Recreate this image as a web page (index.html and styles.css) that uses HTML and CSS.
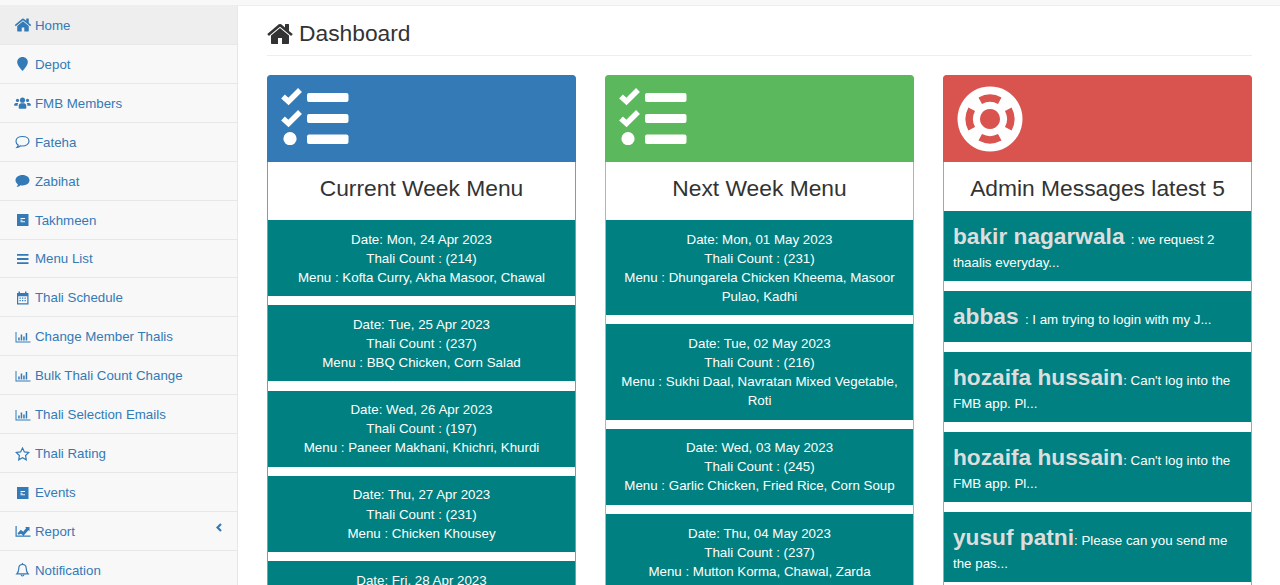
FILE: index.html
```html
<!DOCTYPE html>
<html lang="en">
<head>
<meta charset="utf-8">
<title>Dashboard</title>
<link rel="stylesheet" href="styles.css">
</head>
<body>
<svg class="defs" width="0" height="0" aria-hidden="true">
  <symbol id="i-home" viewBox="0 0 1792 1792"><path d="M1472 992v480q0 26-19 45t-45 19h-384v-384h-256v384h-384q-26 0-45-19t-19-45v-480q0-1 .5-3t.5-3l575-474 575 474q1 2 1 6zm223-69l-62 74q-8 9-21 11h-3q-13 0-21-7l-692-577-692 577q-12 8-24 7-13-2-21-11l-62-74q-8-10-7-23.500t11-21.500l719-599q32-26 76-26t76 26l244 204v-195q0-14 9-23t23-9h192q14 0 23 9t9 23v408l219 182q10 8 11 21.500t-7 23.500z"/></symbol>
  <symbol id="i-pin" viewBox="0 0 16 16"><path d="M8 1c3 0 5.300 2.200 5.300 5 0 3-3 6.500-5.300 9-2.300-2.500-5.300-6-5.300-9 0-2.800 2.300-5 5.300-5z"/></symbol>
  <symbol id="i-users" viewBox="0 0 18 16"><circle cx="9" cy="5" r="2.700"/><circle cx="3.700" cy="5.300" r="1.700"/><circle cx="14.300" cy="5.300" r="1.700"/><path d="M5 13.500V11c0-1.700 1.300-2.700 2.500-2.700h3c1.200 0 2.500 1 2.500 2.700v2.500q0 .5-1 .5H6q-1 0-1-.5zM0 10.500c0-1.500 1-2.500 2-2.500h2.500C4 8.700 3.800 9.500 3.800 10.800H1q-1 0-1-.3zM18 10.500c0-1.500-1-2.500-2-2.500h-2.500c.5.700.7 1.500.7 2.800H17q1 0 1-.3z"/></symbol>
  <symbol id="i-comment-o" viewBox="0 0 16 16"><path class="line" d="M8 2.500c3.700 0 6.500 2 6.500 4.700S11.700 12 8 12c-.7 0-1.300 0-2-.2-1 .9-2.200 1.500-3.500 1.700.7-.8 1.100-1.600 1.200-2.500C2.400 10.200 1.500 8.800 1.500 7.200 1.500 4.500 4.300 2.500 8 2.500z"/></symbol>
  <symbol id="i-comment" viewBox="0 0 16 16"><path d="M8 2c4 0 7 2.300 7 5.200s-3 5.200-7 5.200c-.7 0-1.300 0-2-.2-1 1-2.500 1.600-4 1.800.8-.9 1.300-1.800 1.400-2.800C2 10.200 1 8.800 1 7.200 1 4.300 4 2 8 2z"/></symbol>
  <symbol id="i-book" viewBox="0 0 16 16"><path fill-rule="evenodd" d="M2.500 2h11.500v12H2.500zM6 6v1h4.500V6zM6 7.700v1h2V7.700zM6 9.300v1h4.500v-1z"/></symbol>
  <symbol id="i-bars" viewBox="0 0 16 16"><path d="M2.500 3h11.500v1.800H2.500zM2.500 7.100h11.500v1.800H2.500zM2.500 11.200h11.500V13H2.500z"/></symbol>
  <symbol id="i-cal" viewBox="0 0 16 16"><path fill-rule="evenodd" d="M4 1.500h1.500V3h5V1.500H12V3h2v11.500H2.500V3H4zM3.700 6.300v7h9.100v-7z"/><path d="M5 7.500h1.300v1.300H5zM7.500 7.500h1.300v1.300H7.500zM10 7.500h1.300v1.300H10zM5 10h1.300v1.300H5zM7.500 10h1.300v1.300H7.500zM10 10h1.300v1.300H10z"/></symbol>
  <symbol id="i-chart" viewBox="0 0 16 16"><path d="M1 3h1v9.500h14v1H1zM3.700 8.500h1.500v3H3.700zM6.200 5.500h1.500v6H6.200zM8.700 7.500h1.500v4H8.700zM11.200 4h1.500v7.500h-1.500z"/></symbol>
  <symbol id="i-star" viewBox="0 0 16 16"><path class="line" d="M8 2l1.900 3.900 4.300.6-3.100 3 .7 4.300L8 11.800l-3.800 2 .7-4.300-3.100-3 4.300-.6z"/></symbol>
  <symbol id="i-area" viewBox="0 0 16 16"><path d="M1 3h1.200v9.500H16v1.200H1zM3 10.500l3.300-3.700 2.400 2 3-3.800-1.200-1H15v4.200l-1.100-1-4.900 5.600-2.500-2L4 11.800z"/></symbol>
  <symbol id="i-bell" viewBox="0 0 16 16"><path class="line" d="M8 2.500c2.300 0 3.700 1.700 3.700 3.700 0 3 .7 4.300 2 5.600H2.300c1.300-1.300 2-2.600 2-5.600 0-2 1.400-3.700 3.700-3.700z"/><path class="line" d="M6.500 12.500c.2 1 .8 1.500 1.500 1.500s1.300-.5 1.500-1.500M8 1v1.500"/></symbol>
  <symbol id="i-chev" viewBox="0 0 6 9"><path class="chev-line" d="M5 1L1.500 4.500 5 8"/></symbol>
  <symbol id="i-tasks" viewBox="0 0 68 58"><path class="tick" d="M2 9.500l5.500 5L19 3"/><path class="tick" d="M2 31.500l5.500 5L19 25"/><circle cx="9" cy="51.700" r="6.600"/><rect x="26" y="6" width="41.500" height="9" rx="2"/><rect x="26" y="27" width="41.500" height="9" rx="2"/><rect x="26" y="47.500" width="41.500" height="9.500" rx="2"/></symbol>
  <symbol id="i-ring" viewBox="0 0 66 66"><path fill-rule="evenodd" d="M33 0.500a32.500 32.500 0 1 0 .01 0zM33 23a10 10 0 1 0 .01 0zM21.500 11.400A24.500 24.500 0 0 1 44.500 11.400L41 18A17 17 0 0 0 25 18zM54.600 21.500A24.500 24.500 0 0 1 54.600 44.500L48 41A17 17 0 0 0 48 25zM44.500 54.600A24.500 24.500 0 0 1 21.500 54.600L25 48A17 17 0 0 0 41 48zM11.400 44.500A24.500 24.500 0 0 1 11.400 21.500L18 25A17 17 0 0 0 18 41z"/></symbol>
</svg>
<div class="topbar"></div>
<div class="layout">
  <nav class="sidebar">
    <a class="item active"><svg class="ic ic-home"><use href="#i-home"/></svg>Home</a>
    <a class="item"><svg class="ic"><use href="#i-pin"/></svg>Depot</a>
    <a class="item"><svg class="ic"><use href="#i-users"/></svg>FMB Members</a>
    <a class="item"><svg class="ic"><use href="#i-comment-o"/></svg>Fateha</a>
    <a class="item"><svg class="ic"><use href="#i-comment"/></svg>Zabihat</a>
    <a class="item"><svg class="ic"><use href="#i-book"/></svg>Takhmeen</a>
    <a class="item"><svg class="ic"><use href="#i-bars"/></svg>Menu List</a>
    <a class="item"><svg class="ic"><use href="#i-cal"/></svg>Thali Schedule</a>
    <a class="item"><svg class="ic"><use href="#i-chart"/></svg>Change Member Thalis</a>
    <a class="item"><svg class="ic"><use href="#i-chart"/></svg>Bulk Thali Count Change</a>
    <a class="item"><svg class="ic"><use href="#i-chart"/></svg>Thali Selection Emails</a>
    <a class="item"><svg class="ic"><use href="#i-star"/></svg>Thali Rating</a>
    <a class="item"><svg class="ic"><use href="#i-book"/></svg>Events</a>
    <a class="item"><svg class="ic"><use href="#i-area"/></svg>Report<svg class="chev"><use href="#i-chev"/></svg></a>
    <a class="item"><svg class="ic"><use href="#i-bell"/></svg>Notification</a>
  </nav>
  <main class="main">
    <h1 class="page-title"><svg class="title-ic"><use href="#i-home"/></svg>Dashboard</h1>
    <div class="cards">
      <section class="card card-blue">
        <div class="card-head"><svg class="tasks"><use href="#i-tasks"/></svg></div>
        <h3 class="card-title">Current Week Menu</h3>
        <div class="row">Date: Mon, 24 Apr 2023<br>Thali Count : (214)<br>Menu : Kofta Curry, Akha Masoor, Chawal</div>
        <div class="row">Date: Tue, 25 Apr 2023<br>Thali Count : (237)<br>Menu : BBQ Chicken, Corn Salad</div>
        <div class="row">Date: Wed, 26 Apr 2023<br>Thali Count : (197)<br>Menu : Paneer Makhani, Khichri, Khurdi</div>
        <div class="row">Date: Thu, 27 Apr 2023<br>Thali Count : (231)<br>Menu : Chicken Khousey</div>
        <div class="row">Date: Fri, 28 Apr 2023<br>Thali Count : (228)<br>Menu : Chicken Biryani</div>
      </section>
      <section class="card card-green">
        <div class="card-head"><svg class="tasks"><use href="#i-tasks"/></svg></div>
        <h3 class="card-title">Next Week Menu</h3>
        <div class="row">Date: Mon, 01 May 2023<br>Thali Count : (231)<br>Menu : Dhungarela Chicken Kheema, Masoor Pulao, Kadhi</div>
        <div class="row">Date: Tue, 02 May 2023<br>Thali Count : (216)<br>Menu : Sukhi Daal, Navratan Mixed Vegetable, Roti</div>
        <div class="row">Date: Wed, 03 May 2023<br>Thali Count : (245)<br>Menu : Garlic Chicken, Fried Rice, Corn Soup</div>
        <div class="row">Date: Thu, 04 May 2023<br>Thali Count : (237)<br>Menu : Mutton Korma, Chawal, Zarda</div>
      </section>
      <section class="card card-red">
        <div class="card-head"><svg class="ring"><use href="#i-ring"/></svg></div>
        <h3 class="card-title card-title-short">Admin Messages latest 5</h3>
        <div class="msg"><span class="who">bakir nagarwala </span>: we request 2 thaalis everyday...</div>
        <div class="msg"><span class="who">abbas </span>: I am trying to login with my J...</div>
        <div class="msg"><span class="who">hozaifa hussain</span>: Can't log into the FMB app. Pl...</div>
        <div class="msg"><span class="who">hozaifa hussain</span>: Can't log into the FMB app. Pl...</div>
        <div class="msg"><span class="who">yusuf patni</span>: Please can you send me the pas...</div>
      </section>
    </div>
  </main>
</div>
</body>
</html>
```
FILE: styles.css
```css
* { box-sizing: border-box; }
html, body { margin: 0; height: 585px; overflow: hidden; }
body { font-family: "Liberation Sans", Arial, sans-serif; font-size: 13.33px; color: #333; background: #fff; }
.defs { position: absolute; }
.line { fill: none; stroke: currentColor; stroke-width: 1.2; }
.tick { fill: none; stroke: currentColor; stroke-width: 5.5; }
.chev-line { fill: none; stroke: currentColor; stroke-width: 2.2; }

.topbar { height: 6px; background: #f8f8f8; border-bottom: 1px solid #eee; }
.layout { display: flex; align-items: flex-start; }

.sidebar { width: 238px; flex: none; height: 579px; background: #f8f8f8; border-right: 1px solid #e7e7e7; }
.item { display: flex; align-items: center; height: 38.93px; padding: 1px 15px 0 14px; color: #337ab7; border-bottom: 1px solid #e7e7e7; font-size: 13.3px; white-space: nowrap; }
.item.active { background: #eee; }
.ic { width: 17px; height: 16px; margin-right: 4px; fill: currentColor; flex: none; }
.ic-home { width: 18px; height: 18px; margin-right: 3px; margin-top: -1px; }
.chev { width: 6px; height: 9px; margin-left: auto; margin-bottom: 7px; }

.main { flex: 1; min-width: 0; padding: 0 28px 0 29px; }
.page-title { display: flex; align-items: center; margin: 0 0 19px; height: 50px; padding-top: 7px; padding-bottom: 1px; font-size: 22.8px; font-weight: 400; color: #333; border-bottom: 1px solid #eee; }
.title-ic { width: 28px; height: 28px; margin-left: -1.5px; margin-right: 5.5px; fill: currentColor; flex: none; }

.cards { display: grid; grid-template-columns: repeat(3, 1fr); column-gap: 29px; }
.card { border: 1px solid; border-radius: 4px; background: #fff; }
.card-blue { border-color: #6c9fcc; }
.card-green { border-color: #8ccf8c; }
.card-red { border-color: #e68a87; }
.card-head { height: 87px; margin: -1px -1px 0; padding: 0 14px; color: #fff; border-radius: 4px 4px 0 0; overflow: hidden; }
.card-blue .card-head { background: #337ab7; }
.card-green .card-head { background: #5cb85c; }
.card-red .card-head { background: #d9534f; }
.tasks { display: block; width: 68px; height: 58px; margin-top: 12px; fill: currentColor; }
.ring { display: block; width: 66px; height: 66px; margin-top: 11px; fill: currentColor; }
.card-title { margin: 0; height: 58px; line-height: 52px; text-align: center; font-size: 22.8px; font-weight: 400; color: #333; }
.card-title-short { height: 49px; }
.row { background: #008080; color: #fff; font-size: 13.33px; line-height: 19.05px; text-align: center; padding: 9.5px; margin-bottom: 9.2px; }
.msg { background: #008080; color: #fff; font-size: 13.33px; line-height: 19.05px; padding: 9px 9.5px 9px 9px; margin-bottom: 10px; }
.who { font-size: 22.7px; line-height: 33px; font-weight: 700; color: #ddd; }
```
